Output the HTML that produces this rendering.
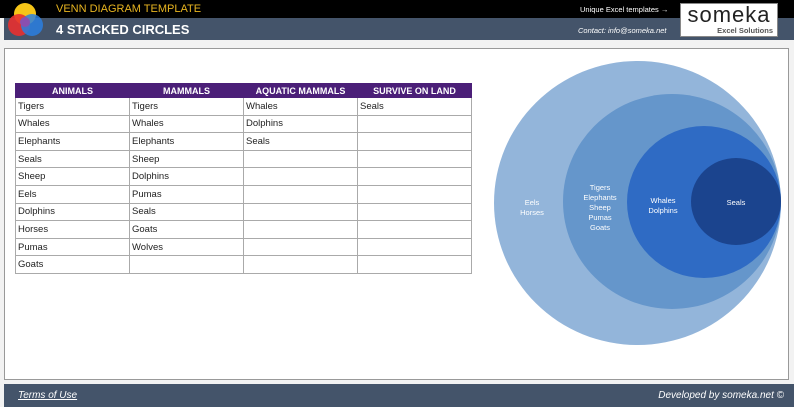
<!DOCTYPE html>
<html><head><style>
*{margin:0;padding:0;box-sizing:border-box}
body{width:794px;height:407px;overflow:hidden;background:#f2f2f2;font-family:"Liberation Sans",sans-serif;position:relative}
.top{position:absolute;left:0;top:0;width:794px;height:18px;background:#000}
.sub{position:absolute;left:4px;top:18px;width:790px;height:22px;background:#44546a}
.t1{position:absolute;left:56px;top:3px;font-size:11px;color:#e8b520;}
.t2{position:absolute;left:56px;top:22px;font-size:13px;font-weight:bold;color:#fff}
.panel{position:absolute;left:4px;top:48px;width:785px;height:332px;background:#fff;border:1px solid #999}
.foot{position:absolute;left:4px;top:384px;width:790px;height:23px;background:#44546a;color:#fff;font-size:10px;font-style:italic}
table{position:absolute;left:15px;top:83px;border-collapse:collapse;font-size:9.5px;table-layout:fixed}
th{background:#4b1f78;color:#fff;height:14px;font-size:9px;border:1px solid #4b1f78;width:114px}
td{height:17.6px;border:1px solid #aaa;padding-left:2px;vertical-align:middle;color:#222}
</style></head><body>
<div class="top"></div><div class="sub"></div>
<svg style="position:absolute;left:7px;top:2px" width="36" height="36"><circle cx="18" cy="12" r="11" fill="#f5c518"/><circle cx="12" cy="23" r="11" fill="#e83030" opacity=".9"/><circle cx="25" cy="23" r="11" fill="#2a7fe0" opacity=".85"/><circle cx="18" cy="20" r="5" fill="#8a4fb0"/></svg>
<div class="t1">VENN DIAGRAM TEMPLATE</div>
<div class="t2">4 STACKED CIRCLES</div>
<div style="position:absolute;left:580px;top:5px;font-size:7.5px;color:#fff">Unique Excel templates →</div>
<div style="position:absolute;left:578px;top:26px;font-size:7.5px;color:#fff;font-style:italic">Contact: info@someka.net</div>
<div style="position:absolute;left:680px;top:3px;width:98px;height:34px;background:#fff;border:1px solid #888;text-align:center">
<div style="font-size:22px;line-height:22px;color:#222;letter-spacing:1px">someka</div>
<div style="font-size:7.5px;font-weight:bold;color:#555;text-align:right;padding-right:4px">Excel Solutions</div></div>
<div class="panel"></div>
<table>
<tr><th>ANIMALS</th><th>MAMMALS</th><th>AQUATIC MAMMALS</th><th>SURVIVE ON LAND</th></tr>
<tr><td>Tigers</td><td>Tigers</td><td>Whales</td><td>Seals</td></tr>
<tr><td>Whales</td><td>Whales</td><td>Dolphins</td><td></td></tr>
<tr><td>Elephants</td><td>Elephants</td><td>Seals</td><td></td></tr>
<tr><td>Seals</td><td>Sheep</td><td></td><td></td></tr>
<tr><td>Sheep</td><td>Dolphins</td><td></td><td></td></tr>
<tr><td>Eels</td><td>Pumas</td><td></td><td></td></tr>
<tr><td>Dolphins</td><td>Seals</td><td></td><td></td></tr>
<tr><td>Horses</td><td>Goats</td><td></td><td></td></tr>
<tr><td>Pumas</td><td>Wolves</td><td></td><td></td></tr>
<tr><td>Goats</td><td></td><td></td><td></td></tr>
</table>
<svg style="position:absolute;left:0;top:0" width="794" height="407" font-family="Liberation Sans, sans-serif" font-size="7.5" fill="#fff" text-anchor="middle">
<ellipse cx="637.5" cy="203" rx="143.5" ry="142" fill="#93b5da"/>
<ellipse cx="672" cy="201.5" rx="109" ry="107.5" fill="#6596cb"/>
<ellipse cx="704" cy="202" rx="77" ry="76" fill="#2f6bc4"/>
<ellipse cx="736" cy="201.5" rx="45" ry="43.5" fill="#1b448e"/>
<text x="532" y="205">Eels</text><text x="532" y="215">Horses</text>
<text x="600" y="190">Tigers</text><text x="600" y="200">Elephants</text><text x="600" y="210">Sheep</text><text x="600" y="220">Pumas</text><text x="600" y="230">Goats</text>
<text x="663" y="203">Whales</text><text x="663" y="213">Dolphins</text>
<text x="736" y="205">Seals</text>
</svg>
<div class="foot"><span style="position:absolute;left:14px;top:6px;text-decoration:underline">Terms of Use</span><span style="position:absolute;right:10px;top:6px">Developed by someka.net ©</span></div>
</body></html>
